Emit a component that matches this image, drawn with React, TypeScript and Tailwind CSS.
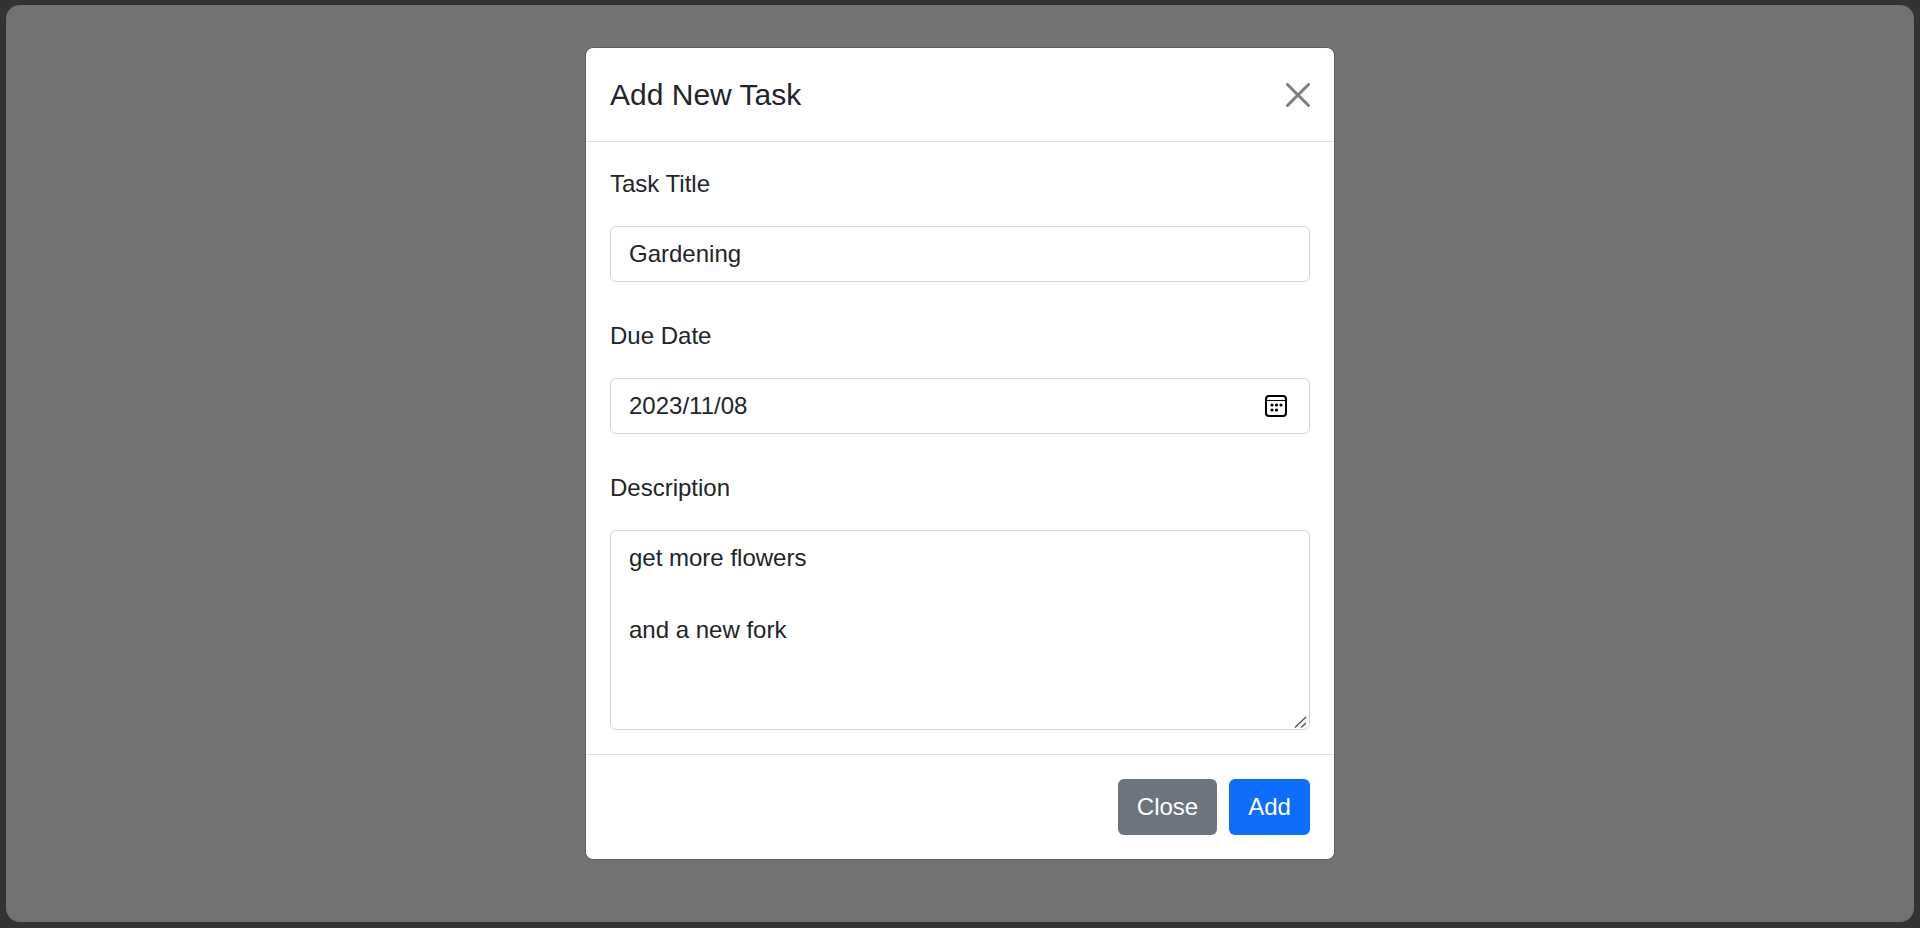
function CloseIcon() {
    return (
        <svg width="24" height="24" viewBox="0 0 16 16" fill="#000" className="opacity-50">
            <path d="M.293.293a1 1 0 0 1 1.414 0L8 6.586 14.293.293a1 1 0 1 1 1.414 1.414L9.414 8l6.293 6.293a1 1 0 0 1-1.414 1.414L8 9.414l-6.293 6.293a1 1 0 0 1-1.414-1.414L6.586 8 .293 1.707a1 1 0 0 1 0-1.414z" />
        </svg>
    );
}

function CalendarIcon() {
    return (
        <svg width="22" height="22" viewBox="0 0 22 22" fill="none" className="absolute right-[23px] top-[17px]">
            <rect x="1" y="1" width="20" height="20" rx="3" stroke="#000" strokeWidth="2" />
            <path d="M1 5.5h20" stroke="#000" strokeWidth="1" />
            <circle cx="7" cy="10" r="1.6" fill="#000" />
            <circle cx="11.5" cy="10" r="1.6" fill="#000" />
            <circle cx="16" cy="10" r="1.6" fill="#000" />
            <circle cx="7" cy="15" r="1.6" fill="#000" />
            <circle cx="11.5" cy="15" r="1.6" fill="#000" />
        </svg>
    );
}

function ResizeGrip() {
    return (
        <svg width="14" height="14" viewBox="0 0 14 14" fill="none" className="absolute right-[2px] bottom-[1px]">
            <path d="M1 12.5L12 2M7 12.5L12 8" stroke="#555555" strokeWidth="1.5" />
        </svg>
    );
}

const inputClass = 'block w-full h-[56px] px-[18px] py-[9px] bg-white border border-[#ced4da] rounded-[6px] text-[24px] leading-[36px] text-[#212529] outline-none';
const labelClass = 'block text-[24px] leading-[36px] text-[#212529]';

export default function App() {
    return (
        <div className="h-[928px] w-full overflow-hidden bg-[#333333] pt-[5px] px-[6px] pb-[6px] font-['Liberation_Sans',Arial,sans-serif]">
            <div className="h-full rounded-[14px] bg-[#727272] flex justify-center pt-[42px]">
                <div className="w-[750px] h-[813px] bg-white border border-[#5c5c5c] rounded-[8px] flex flex-col overflow-hidden">
                    <div className="h-[94px] shrink-0 border-b border-[#dee2e6] px-[24px] flex items-center justify-between">
                        <h5 className="text-[30px] leading-[45px] text-[#212529]">Add New Task</h5>
                        <button className="mt-[1px] flex items-center justify-center">
                            <CloseIcon />
                        </button>
                    </div>

                    <div className="flex-1 px-[24px] pt-[24px]">
                        <label className={`${labelClass} mb-[24px]`}>Task Title</label>
                        <input className={inputClass} defaultValue="Gardening" readOnly />

                        <label className={`${labelClass} mt-[36px] mb-[24px]`}>Due Date</label>
                        <div className="relative">
                            <input className={inputClass} defaultValue="2023/11/08" readOnly />
                            <CalendarIcon />
                        </div>

                        <label className={`${labelClass} mt-[36px] mb-[24px]`}>Description</label>
                        <div className="relative">
                            <textarea
                                className="block w-full h-[200px] resize-none px-[18px] py-[9px] bg-white border border-[#ced4da] rounded-[6px] text-[24px] leading-[36px] text-[#212529] outline-none"
                                defaultValue={'get more flowers\n\nand a new fork'}
                                readOnly
                            />
                            <ResizeGrip />
                        </div>
                    </div>

                    <div className="h-[105px] shrink-0 border-t border-[#dee2e6] px-[24px] flex items-start justify-end gap-[12px] pt-[24px]">
                        <button className="h-[56px] w-[99px] rounded-[6px] bg-[#6c757d] text-white text-[24px]">Close</button>
                        <button className="h-[56px] w-[81px] rounded-[6px] bg-[#0d6efd] text-white text-[24px]">Add</button>
                    </div>
                </div>
            </div>
        </div>
    );
}
